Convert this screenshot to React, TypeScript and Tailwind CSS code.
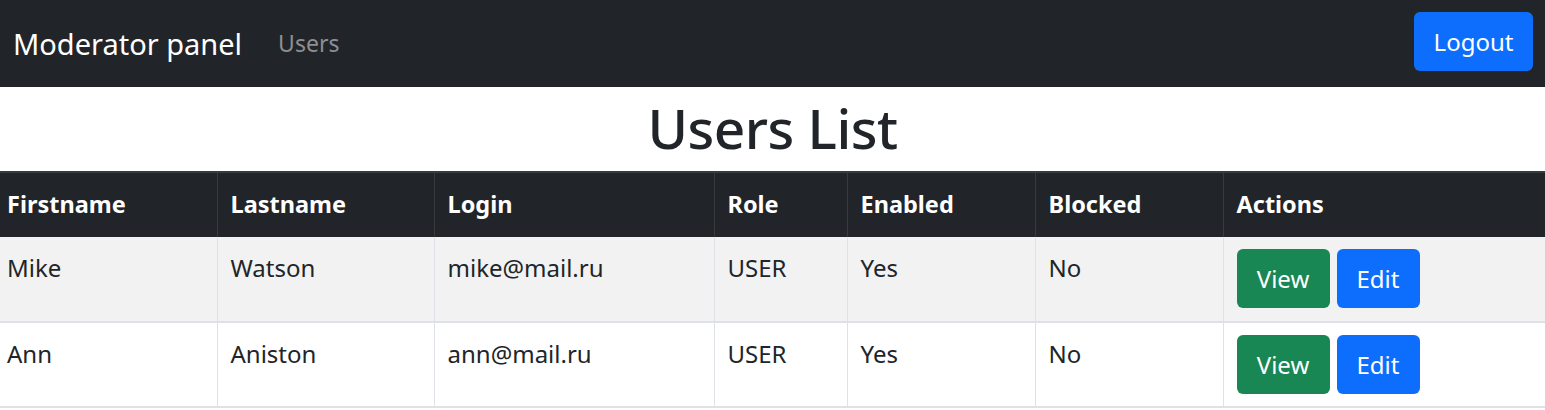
import React from "react";

const rows = [
  { first: "Mike", last: "Watson", login: "mike@mail.ru", role: "USER", enabled: "Yes", blocked: "No" },
  { first: "Ann", last: "Aniston", login: "ann@mail.ru", role: "USER", enabled: "Yes", blocked: "No" },
];

const headers = ["Firstname", "Lastname", "Login", "Role", "Enabled", "Blocked", "Actions"];
const widths = ["w-[217px]", "w-[217px]", "w-[280px]", "w-[133px]", "w-[188px]", "w-[188px]", "w-[322px]"];

export default function App() {
  const font = { fontFamily: '"Segoe UI", "Noto Sans", "Open Sans", sans-serif' };
  return (
    <div className="w-[1545px] h-[410px] overflow-hidden bg-white text-[#212529]" style={font}>
      <nav className="h-[87px] bg-[#212529] flex items-center justify-between pl-[13px] pr-[12px]">
        <div className="flex items-center">
          <span className="text-[29px] leading-[47px] text-white">Moderator panel</span>
          <span className="ml-[36px] text-[23px] text-[#8c8f92]">Users</span>
        </div>
        <button className="h-[59px] w-[119px] mb-[4px] rounded-[6px] bg-[#0d6efd] text-white text-[24px]">Logout</button>
      </nav>
      <h1 className="h-[84px] flex items-center justify-center text-[55px] tracking-[-0.5px] font-medium leading-none pb-[4px] text-[#212529]">
        Users List
      </h1>
      <table className="w-[1545px] table-fixed border-collapse text-[24px]">
        <colgroup>
          {widths.map((w, i) => (
            <col key={i} className={w} />
          ))}
        </colgroup>
        <thead>
          <tr className="h-[65px] bg-[#212529] text-white border-t-2 border-[#373b3e]">
            {headers.map((h, i) => (
              <th
                key={h}
                className={`text-left font-bold text-[23.5px] align-middle ${i === 0 ? "pl-[7px]" : "pl-[13px] border-l border-[#373b3e]"}`}
              >
                {h}
              </th>
            ))}
          </tr>
        </thead>
        <tbody>
          {rows.map((r, ri) => (
            <tr key={ri} className={`h-[85px] border-b-2 border-[#dee2e6] ${ri === 0 ? "bg-[#f2f2f2]" : "bg-white"}`}>
              {[r.first, r.last, r.login, r.role, r.enabled, r.blocked].map((c, ci) => (
                <td
                  key={ci}
                  className={`align-top pt-[12px] leading-[38px] ${ci === 0 ? "pl-[7px]" : "pl-[13px] border-l border-[#dee2e6]"}`}
                >
                  {c}
                </td>
              ))}
              <td className="align-top pt-[12px] pl-[13px] border-l border-[#dee2e6]">
                <div className="flex gap-[7px]">
                  <button className="h-[59px] w-[93px] rounded-[6px] bg-[#198754] text-white text-[24px]">View</button>
                  <button className="h-[59px] w-[83px] rounded-[6px] bg-[#0d6efd] text-white text-[24px]">Edit</button>
                </div>
              </td>
            </tr>
          ))}
        </tbody>
      </table>
    </div>
  );
}
